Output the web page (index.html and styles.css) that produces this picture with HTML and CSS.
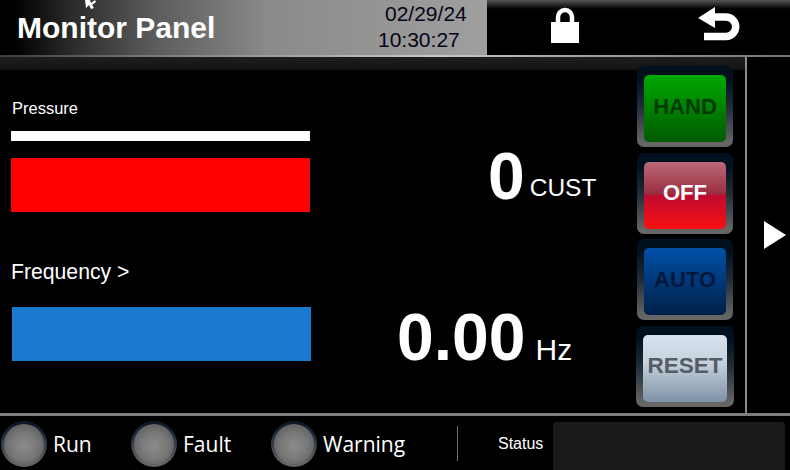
FILE: index.html
```html
<!DOCTYPE html>
<html lang="en">
<head>
    <meta charset="UTF-8">
    <title>Monitor Panel</title>
    <link rel="stylesheet" href="styles.css">
</head>
<body>
    <div class="screen">
        <header class="header">
            <div class="title-bar">
                <h1>Monitor Panel</h1>
                <div class="clock">
                    <div class="date">02/29/24</div>
                    <div class="time">10:30:27</div>
                </div>
            </div>
            <div class="header-icons">
                <svg class="lock-icon" width="28" height="36" viewBox="0 0 28 36">
                    <path d="M7 16 V10 a7 7 0 0 1 14 0 V16" fill="none" stroke="#fff" stroke-width="4.5"/>
                    <rect x="0" y="15" width="28" height="21" fill="#fff"/>
                </svg>
                <svg class="back-icon" width="44" height="36" viewBox="0 0 44 36">
                    <path d="M0 12 L17 1 V22 Z" fill="#fff"/>
                    <path d="M15 11 H28 a9.7 9.7 0 0 1 0 19.4 H6" fill="none" stroke="#fff" stroke-width="7.5"/>
                </svg>
            </div>
        </header>

        <main class="main">
            <div class="content">
                <section class="bars">
                    <div class="pressure-label">Pressure</div>
                    <div class="bar-white"></div>
                    <div class="bar-red"></div>
                    <div class="frequency-label">Frequency &gt;</div>
                    <div class="bar-blue"></div>
                </section>
                <section class="values">
                    <div class="value value-cust"><span class="num">0</span><span class="unit-cust">CUST</span></div>
                    <div class="value value-hz"><span class="num">0.00</span><span class="unit-hz">Hz</span></div>
                </section>
                <section class="buttons">
                    <div class="btn-frame"><div class="btn btn-hand">HAND</div></div>
                    <div class="btn-frame"><div class="btn btn-off">OFF</div></div>
                    <div class="btn-frame"><div class="btn btn-auto">AUTO</div></div>
                    <div class="btn-frame btn-frame-wide"><div class="btn btn-reset">RESET</div></div>
                </section>
            </div>
            <aside class="side">
                <svg width="22" height="28" viewBox="0 0 22 28"><path d="M0 0 L22 14 L0 28 Z" fill="#fff"/></svg>
            </aside>
        </main>

        <footer class="footer">
            <div class="indicator ind-run"><span class="led"></span><span class="ind-text">Run</span></div>
            <div class="indicator ind-fault"><span class="led"></span><span class="ind-text">Fault</span></div>
            <div class="indicator ind-warning"><span class="led"></span><span class="ind-text">Warning</span></div>
            <div class="divider"></div>
            <div class="status-label">Status</div>
            <div class="status-box"></div>
        </footer>

        <!-- mouse pointer left on the screen -->
        <svg class="cursor" width="12" height="9" viewBox="0 0 12 9">
            <path d="M0 0 H5 L6 3 L10 0 L11 2 L7 5 L9 8 L6 9 L4 5 L1 8 Z" fill="#fff"/>
        </svg>
    </div>
</body>
</html>
```

FILE: styles.css
```css
body {
    margin: 0;
    background-color: #000;
    color: #fff;
    font-family: "Liberation Sans", Arial, sans-serif;
}
.screen {
    position: relative;
    width: 790px;
    height: 470px;
    overflow: hidden;
    background-color: #000;
}

/* header */
.header {
    display: flex;
    height: 55px;
    border-bottom: 2px solid #8e8e8e;
    border-image: linear-gradient(90deg, #3c3c3c, #8a8a8a 25%, #c8c8c8 55%, #a8a8a8 70%, #747474) 1;
}
.title-bar {
    display: flex;
    width: 487px;
    background: linear-gradient(90deg, #000 3%, #2c2c2c 15%, #5c5c5c 32%, #8a8a88 55%, #9f9f9d 100%);
}
.title-bar h1 {
    margin: 0;
    padding: 12px 0 0 17px;
    width: 368px;
    font-size: 30px;
    line-height: 32px;
    font-weight: bold;
}
.clock {
    padding-top: 1px;
    color: #05051a;
    font-size: 21px;
    line-height: 26px;
}
.time {
    margin-left: -7px;
}
.header-icons {
    flex: 1;
    position: relative;
    background: linear-gradient(#555 0, #000 9px);
}
.lock-icon {
    position: absolute;
    left: 64px;
    top: 7px;
}
.back-icon {
    position: absolute;
    left: 211px;
    top: 6px;
}

/* middle part */
.main {
    display: flex;
    height: 356px;
}
.content {
    display: flex;
    width: 745px;
    background: linear-gradient(#1e1e1e 0, #141414 12px, #000 14px);
}
.side {
    flex: 1;
    display: flex;
    align-items: center;
    padding-left: 17px;
    border-left: 2px solid #8a8a8a;
}
.bars {
    width: 312px;
    padding-left: 11px;
    box-sizing: border-box;
}
.pressure-label {
    margin: 41px 0 0 1px;
    font-size: 16.5px;
    line-height: 20px;
}
.bar-white {
    width: 299px;
    height: 10px;
    margin-top: 13px;
    background-color: #fff;
}
.bar-red {
    width: 299px;
    height: 54px;
    margin-top: 17px;
    background-color: #f00;
}
.frequency-label {
    margin: 47px 0 0 0;
    font-size: 21.2px;
    line-height: 26px;
}
.bar-blue {
    width: 299px;
    height: 54px;
    margin: 22px 0 0 1px;
    background-color: #1a7ad0;
}

/* values */
.values {
    width: 325px;
}
.value {
    display: flex;
    align-items: baseline;
}
.num {
    font-size: 66px;
    font-weight: bold;
    line-height: 74px;
}
.value-cust {
    margin: 82px 0 0 176px;
}
.value-hz {
    margin: 87px 0 0 85px;
}
.unit-cust {
    position: relative;
    top: -3px;
    font-size: 24.5px;
    margin-left: 5px;
}
.unit-hz {
    font-size: 30px;
    margin-left: 10px;
}

/* buttons */
.buttons {
    padding-top: 9px;
}
.btn-frame {
    box-sizing: border-box;
    width: 96px;
    height: 81px;
    margin-bottom: 5.5px;
    padding: 9px 7px 5px;
    border-radius: 7px;
    background: linear-gradient(#00101f 15%, #202c38 50%, #666 95%);
}
.btn-frame-wide {
    width: 98px;
    margin-left: -1px;
}
.btn {
    box-sizing: border-box;
    display: flex;
    align-items: center;
    justify-content: center;
    height: 67px;
    padding-bottom: 4px;
    border-radius: 5px;
    font-size: 22px;
    font-weight: bold;
}
.btn-hand {
    color: #033a03;
    background: linear-gradient(#00a800, #005a00);
}
.btn-off {
    color: #fff;
    background: linear-gradient(#bb6a78 0, #9a2c40 48%, #c00a30 50%, #f81010 100%);
}
.btn-auto {
    color: #00183a;
    background: linear-gradient(#0050a8, #002048);
}
.btn-reset {
    color: #555c66;
    font-size: 22.5px;
    background: linear-gradient(#d8e2ee 0, #c6d2de 40%, #7f92a6 100%);
}

/* footer */
.footer {
    display: flex;
    align-items: center;
    height: 57px;
    padding-top: 1px;
    border-top: 3px solid #7c7c7c;
    box-sizing: border-box;
}
.indicator {
    display: flex;
    align-items: center;
    font-family: "Open Sans", sans-serif;
    font-size: 21px;
}
.ind-text {
    margin-left: 6px;
}
.led {
    box-sizing: border-box;
    width: 46px;
    height: 46px;
    padding: 3px;
    border-radius: 50%;
    background: linear-gradient(#0c1a2a 10%, #5e6468 90%);
}
.led::before {
    content: "";
    display: block;
    width: 100%;
    height: 100%;
    border-radius: 50%;
    background: radial-gradient(circle at 50% 55%, #8c8c8c 0, #787878 45%, #4c4c4c 100%);
}
.ind-run {
    margin-left: 1px;
    width: 130px;
}
.ind-fault {
    width: 140px;
}
.ind-warning {
    width: 186px;
}
.divider {
    width: 1px;
    height: 35px;
    background-color: #707070;
}
.status-label {
    margin-left: 40px;
    width: 55px;
    font-size: 16px;
}
.status-box {
    align-self: flex-end;
    width: 232px;
    height: 48px;
    border-radius: 3px 3px 0 0;
    background-color: #1a1a1a;
}
.cursor {
    position: absolute;
    left: 85px;
    top: 0;
}
```
